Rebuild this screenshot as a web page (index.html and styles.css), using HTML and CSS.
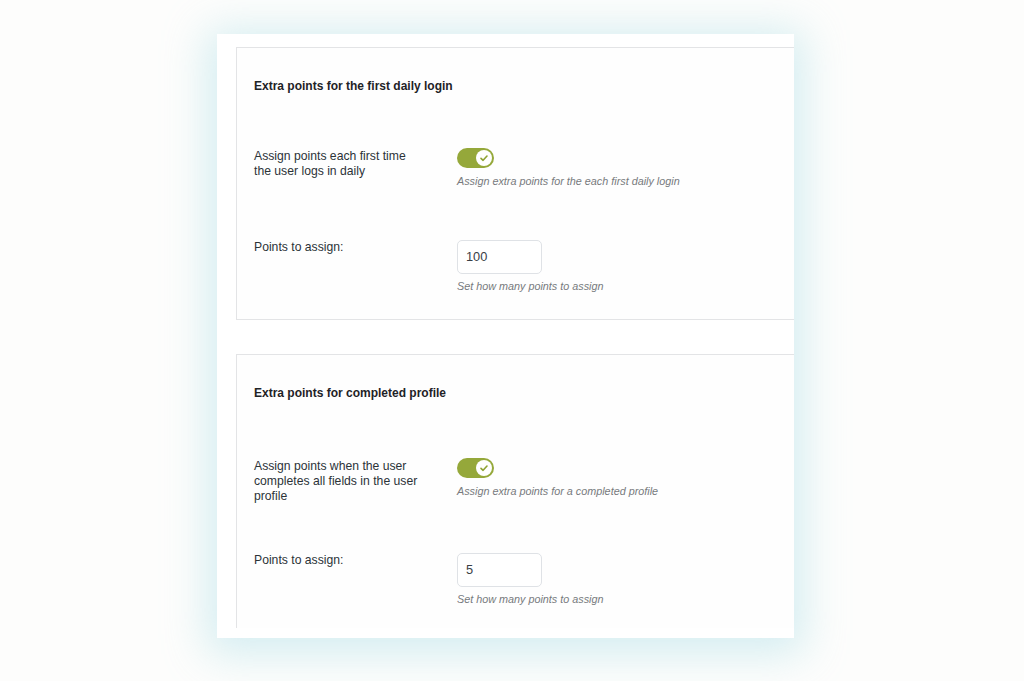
FILE: index.html
```html
<!DOCTYPE html>
<html lang="en">
<head>
<meta charset="utf-8">
<title>Extra points settings</title>
<link rel="stylesheet" href="styles.css">
</head>
<body>
<div class="panel">
  <div class="viewport">
    <section class="card">
      <h2 class="card-title">Extra points for the first daily login</h2>
      <div class="row row-toggle">
        <div class="label">Assign points each first time the user logs in daily</div>
        <div class="field">
          <span class="toggle"><span class="knob"><svg viewBox="0 0 16 16" width="16" height="16"><path d="M5 8.3 L7.1 10.3 L11 6" fill="none" stroke="#8fa233" stroke-width="1.6" stroke-linecap="round" stroke-linejoin="round"/></svg></span></span>
          <div class="desc">Assign extra points for the each first daily login</div>
        </div>
      </div>
      <div class="row row-input">
        <div class="label">Points to assign:</div>
        <div class="field">
          <div class="input">100</div>
          <div class="desc">Set how many points to assign</div>
        </div>
      </div>
    </section>
    <section class="card card-second">
      <h2 class="card-title">Extra points for completed profile</h2>
      <div class="row row-toggle">
        <div class="label">Assign points when the user completes all fields in the user profile</div>
        <div class="field">
          <span class="toggle"><span class="knob"><svg viewBox="0 0 16 16" width="16" height="16"><path d="M5 8.3 L7.1 10.3 L11 6" fill="none" stroke="#8fa233" stroke-width="1.6" stroke-linecap="round" stroke-linejoin="round"/></svg></span></span>
          <div class="desc">Assign extra points for a completed profile</div>
        </div>
      </div>
      <div class="row row-input">
        <div class="label">Points to assign:</div>
        <div class="field">
          <div class="input">5</div>
          <div class="desc">Set how many points to assign</div>
        </div>
      </div>
    </section>
  </div>
</div>
</body>
</html>
```

FILE: styles.css
```css
html, body {
  margin: 0;
  padding: 0;
  background: #fdfdfc;
  height: 681px;
  overflow: hidden;
  font-family: "Liberation Sans", Arial, sans-serif;
}

.panel {
  margin: 34px 0 0 217px;
  width: 577px;
  height: 604px;
  box-sizing: border-box;
  padding: 13px 0 10px 19px;
  background: #ffffff;
  box-shadow: 0 6px 40px 10px rgba(165, 220, 228, 0.45);
  overflow: hidden;
}

.viewport {
  height: 100%;
  overflow: hidden;
}

.card {
  width: 640px;
  box-sizing: border-box;
  border: 1px solid #e3e4e6;
  background: #fefefe;
  padding: 30px 0 26px 17px;
}

.card-second {
  margin-top: 34px;
}

.card-title {
  margin: 0 0 54px;
  font-size: 12px;
  line-height: 16px;
  font-weight: 700;
  color: #1e2327;
}

.card-second .card-title {
  margin-bottom: 57px;
}

.row {
  display: grid;
  grid-template-columns: 203px 1fr;
  align-items: start;
}

.row-input {
  margin-top: 52px;
}

.card-second .row-input {
  margin-top: 49px;
}

.label {
  width: 168px;
  font-size: 12.2px;
  line-height: 15px;
  color: #2c3338;
}

.row-toggle .label {
  padding-top: 1px;
}

.field {
  display: flex;
  flex-direction: column;
  align-items: flex-start;
}

.toggle {
  display: flex;
  align-items: center;
  justify-content: flex-end;
  width: 37px;
  height: 20px;
  box-sizing: border-box;
  padding-right: 2px;
  border-radius: 10px;
  background: #95a83a;
}

.knob {
  width: 16px;
  height: 16px;
  border-radius: 50%;
  background: #ffffff;
  display: flex;
}

.input {
  width: 85px;
  height: 34px;
  box-sizing: border-box;
  border: 1px solid #dfe2e6;
  border-radius: 5px;
  padding: 0 8px;
  font-size: 12.8px;
  line-height: 32px;
  color: #3a4046;
  background: #fff;
}

.desc {
  margin-top: 6px;
  font-size: 10.8px;
  line-height: 14px;
  font-style: italic;
  color: #777a7d;
}

.row-input .desc {
  margin-top: 5px;
}
```
